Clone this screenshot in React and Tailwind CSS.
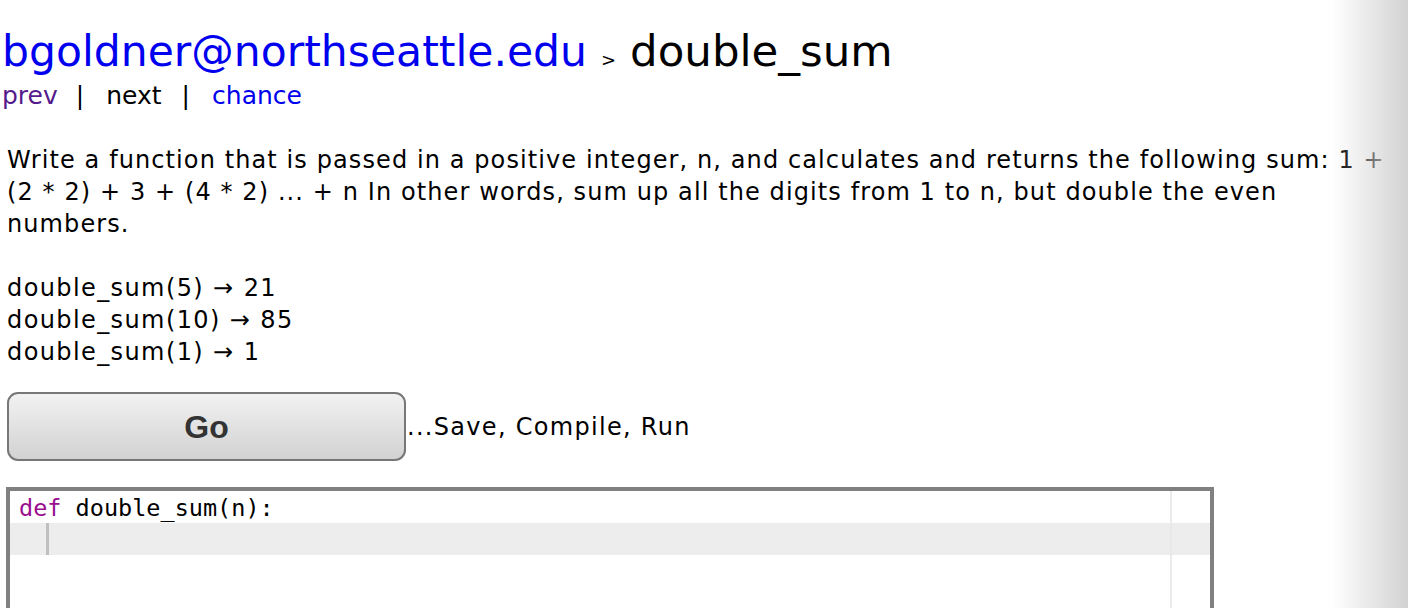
import React from 'react'

const examples = [
  ['double_sum(5)', '21'],
  ['double_sum(10)', '85'],
  ['double_sum(1)', '1'],
]

const App = () => {
  return (
    <div className="relative h-[608px] w-[1408px] overflow-hidden bg-white font-['DejaVu_Sans',sans-serif] text-black">
      {/* Header */}
      <div className="pl-[2px] pt-[26px]">
        <h1 className="flex items-baseline leading-[50px] font-normal">
          <a href="#" className="text-[42.5px] text-[#0000ee]">bgoldner@northseattle.edu</a>
          <span className="ml-[14px] mr-[14px] text-[18px]">&gt;</span>
          <span className="text-[43.5px]">double_sum</span>
        </h1>
        <div className="text-[25px] leading-[22px]">
          <a href="#" className="text-[#551a8b]">prev</a>
          <span className="ml-[18px] mr-[22px]">|</span>
          <span>next</span>
          <span className="ml-[20px] mr-[22px]">|</span>
          <a href="#" className="text-[#0000ee]">chance</a>
        </div>
      </div>

      {/* Problem statement */}
      <div className="mt-[37px] pl-[7px] text-[24px] leading-[32px] tracking-[1.1px]">
        <p>
          Write a function that is passed in a positive integer, n, and calculates and returns the following sum: 1 +
          <br />
          (2 * 2) + 3 + (4 * 2) ... + n In other words, sum up all the digits from 1 to n, but double the even
          <br />
          numbers.
        </p>
        <div className="mt-[32px] tracking-[1.4px]">
          {examples.map(([call, result]) => (
            <div key={call}>
              {call} → {result}
            </div>
          ))}
        </div>
      </div>

      {/* Go button */}
      <div className="mt-[24px] flex items-center pl-[7px]">
        <button className="h-[69px] w-[399px] rounded-[11px] border-2 border-[#777] bg-gradient-to-b from-[#f2f2f2] to-[#d2d2d2] font-['Liberation_Sans',sans-serif] text-[32px] font-bold text-[#333]">
          Go
        </button>
        <span className="ml-[1px] text-[24px] tracking-[1.3px]">...Save, Compile, Run</span>
      </div>

      {/* Editor */}
      <div className="ml-[6px] mt-[26px] h-[200px] w-[1208px] border-4 border-[#808080] font-['DejaVu_Sans_Mono',monospace] text-[23.5px]">
        <div className="relative h-full">
          <div className="h-[32px] pl-[9px] leading-[34px]">
            <span className="text-[#990f8f]">def</span> double_sum(n):
          </div>
          <div className="flex h-[32px] bg-[#ededed] pl-[36px]">
            <div className="h-full w-[3px] bg-[#c0c0c0]" />
          </div>
          <div className="absolute bottom-0 left-[1160px] top-0 w-[2px] bg-[#e6e6e6]/80" />
        </div>
      </div>

      {/* Right edge shade */}
      <div className="pointer-events-none absolute right-0 top-0 h-full w-[76px] bg-gradient-to-r from-white/0 to-[#d2d2d2]" />
    </div>
  )
}

export default App
